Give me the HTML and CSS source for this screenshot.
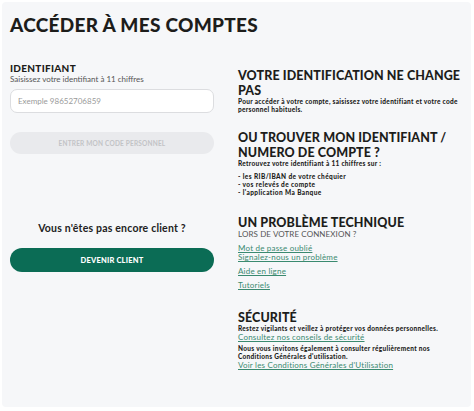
FILE: index.html
```html
<!DOCTYPE html>
<html lang="fr">
<head>
  <meta charset="UTF-8">
  <meta name="viewport" content="width=device-width, initial-scale=1.0">
  <title>Accéder à mes comptes</title>
  <link rel="stylesheet" href="styles.css">
</head>
<body>
  <div class="page">
    <h1 class="title">ACCÉDER À MES COMPTES</h1>

    <div class="columns">
      <!-- Connexion -->
      <section class="login">
        <label class="label" for="ident">IDENTIFIANT</label>
        <p class="hint">Saisissez votre identifiant à 11 chiffres</p>
        <input class="field" id="ident" type="text" placeholder="Exemple 98652706859">
        <button class="btn-code" disabled>ENTRER MON CODE PERSONNEL</button>

        <p class="not-client">Vous n'êtes pas encore client ?</p>
        <button class="btn-green">DEVENIR CLIENT</button>
      </section>

      <!-- Informations -->
      <aside class="infos">
        <div class="block">
          <h2>VOTRE IDENTIFICATION NE CHANGE PAS</h2>
          <p class="strong">Pour accéder à votre compte, saisissez votre identifiant et votre code personnel habituels.</p>
        </div>

        <div class="block block-list">
          <h2>OU TROUVER MON IDENTIFIANT / NUMERO DE COMPTE ?</h2>
          <p class="strong">Retrouvez votre identifiant à 11 chiffres sur :</p>
          <ul class="list">
            <li>- les RIB/IBAN de votre chéquier</li>
            <li>- vos relevés de compte</li>
            <li>- l'application Ma Banque</li>
          </ul>
        </div>

        <div class="block block-help">
          <h2>UN PROBLÈME TECHNIQUE</h2>
          <p class="sub">LORS DE VOTRE CONNEXION ?</p>
          <div class="links">
            <a href="#">Mot de passe oublié</a>
            <a href="#">Signalez-nous un problème</a>
          </div>
          <div class="links"><a href="#">Aide en ligne</a></div>
          <div class="links"><a href="#">Tutoriels</a></div>
        </div>

        <div class="block">
          <h2>SÉCURITÉ</h2>
          <p class="strong">Restez vigilants et veillez à protéger vos données personnelles.</p>
          <a class="link" href="#">Consultez nos conseils de sécurité</a>
          <p class="strong gap">Nous vous invitons également à consulter régulièrement nos Conditions Générales d'utilisation.</p>
          <a class="link" href="#">Voir les Conditions Générales d'Utilisation</a>
        </div>
      </aside>
    </div>
  </div>
</body>
</html>
```

FILE: styles.css
```css
* {
  margin: 0;
  padding: 0;
  box-sizing: border-box;
}
body {
  background: #fff;
  font-family: Lato, "Liberation Sans", sans-serif;
  color: #1d1d1b;
  padding: 2px 3px 4px 2px;
}

.page {
  background: #f6f7f9;
  border-radius: 4px;
  height: 405px;
  padding: 11px 8px 0 8px;
}

.title {
  font-size: 19px;
  font-weight: 900;
  line-height: 24px;
  letter-spacing: 0.3px;
}

.columns {
  display: flex;
  gap: 24px;
  margin-top: 25px;
}

/* Colonne gauche */
.login {
  width: 204px;
  flex-shrink: 0;
  display: flex;
  flex-direction: column;
}
.label {
  font-size: 10px;
  font-weight: 900;
  line-height: 12px;
  letter-spacing: 0.3px;
}
.hint {
  font-size: 8px;
  color: #555;
  line-height: 10px;
}
.field {
  margin-top: 5px;
  height: 24px;
  border: 1px solid #dcdde0;
  border-radius: 7px;
  background: #fff;
  padding: 0 7px;
  font-family: inherit;
  font-size: 8px;
}
.field::placeholder {
  color: #9a9a9a;
}
.btn-code {
  margin-top: 19px;
  height: 22px;
  border: none;
  border-radius: 11px;
  background: #e9eaed;
  color: #c2c3c6;
  font-family: inherit;
  font-weight: bold;
  font-size: 6.5px;
  letter-spacing: 0.2px;
}
.not-client {
  margin-top: 68px;
  text-align: center;
  font-size: 10.5px;
  font-weight: bold;
  color: #222;
  letter-spacing: 0.2px;
}
.btn-green {
  margin-top: 14px;
  height: 24px;
  border: none;
  border-radius: 12px;
  background: #0b6c55;
  color: #fff;
  font-family: inherit;
  font-weight: 900;
  font-size: 7.5px;
  letter-spacing: 0.2px;
}

/* Colonne droite */
.infos {
  flex: 1;
  padding-top: 6px;
}
.block {
  margin-bottom: 16px;
}
.block-list {
  margin-bottom: 18px;
}
.block-help {
  margin-bottom: 20px;
}
.block h2 {
  font-size: 12.5px;
  font-weight: 900;
  line-height: 15px;
  letter-spacing: 0.1px;
}
.strong {
  font-size: 6.5px;
  font-weight: 900;
  line-height: 8px;
  letter-spacing: 0.3px;
}
.strong.gap {
  margin-top: 3px;
}
.list {
  list-style: none;
  margin-top: 5px;
  font-size: 6.5px;
  font-weight: 900;
  line-height: 8px;
  letter-spacing: 0.4px;
}
.sub {
  font-size: 8px;
  color: #555;
  line-height: 9px;
  margin-bottom: 5px;
  letter-spacing: 0.1px;
}
.links {
  display: flex;
  flex-direction: column;
  margin-bottom: 5px;
}
.links a,
.link {
  display: block;
  font-size: 8px;
  line-height: 9px;
  color: #3a8a70;
  text-decoration: underline;
  letter-spacing: 0.2px;
}
```
